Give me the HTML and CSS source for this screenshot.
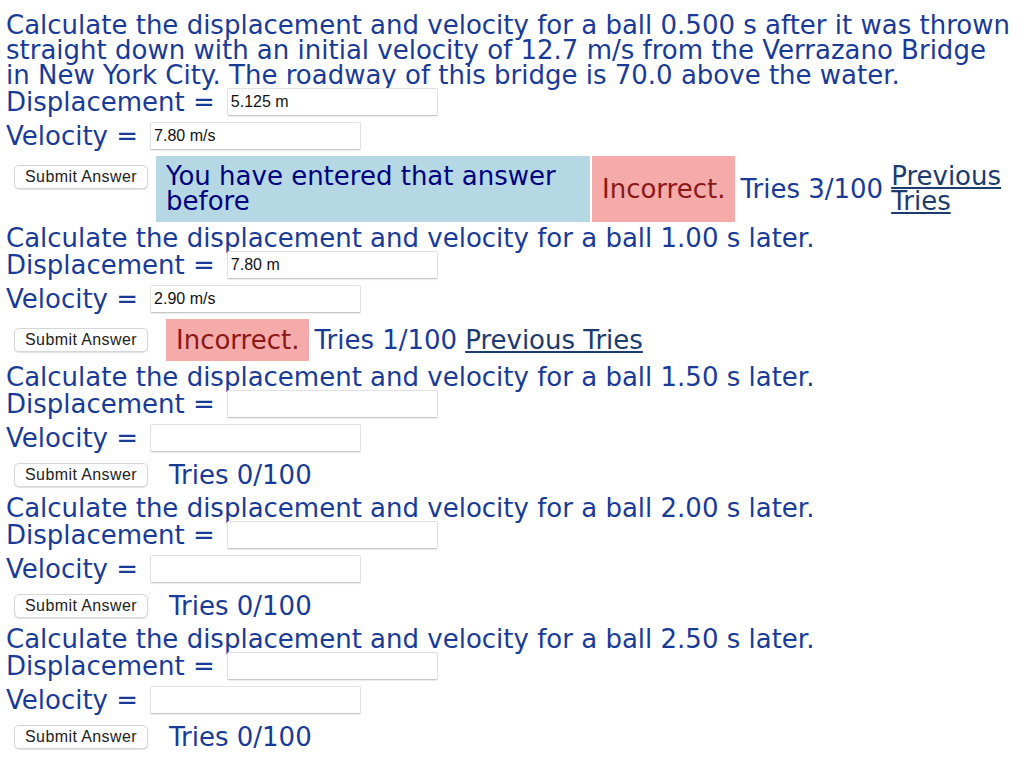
FILE: index.html
```html
<!DOCTYPE html>
<html lang="en">
<head>
    <meta charset="UTF-8">
    <title>Problem</title>
    <link rel="stylesheet" href="styles.css">
</head>
<body>
    <div class="part">
        <p class="question">Calculate the displacement and velocity for a ball 0.500 s after it was thrown straight down with an initial velocity of 12.7 m/s from the Verrazano Bridge in New York City. The roadway of this bridge is 70.0 above the water.</p>
        <div class="field"><span class="label">Displacement =</span><input class="entry" type="text" value="5.125 m"></div>
        <div class="field"><span class="label">Velocity =</span><input class="entry" type="text" value="7.80 m/s"></div>
        <table class="answer-row has-note">
            <tr>
                <td class="submit-cell"><button class="submit">Submit Answer</button></td>
                <td class="message note">You have entered that answer before</td>
                <td class="message incorrect">Incorrect.</td>
                <td class="tries">Tries 3/100</td>
                <td class="prev"><a href="#">Previous Tries</a></td>
            </tr>
        </table>
    </div>

    <div class="part">
        <p class="question">Calculate the displacement and velocity for a ball 1.00 s later.</p>
        <div class="field"><span class="label">Displacement =</span><input class="entry" type="text" value="7.80 m"></div>
        <div class="field"><span class="label">Velocity =</span><input class="entry" type="text" value="2.90 m/s"></div>
        <table class="answer-row">
            <tr>
                <td class="submit-cell"><button class="submit">Submit Answer</button></td>
                <td class="message empty"></td>
                <td class="message incorrect">Incorrect.</td>
                <td class="tries">Tries 1/100</td>
                <td class="prev"><a href="#">Previous Tries</a></td>
            </tr>
        </table>
    </div>

    <div class="part">
        <p class="question">Calculate the displacement and velocity for a ball 1.50 s later.</p>
        <div class="field"><span class="label">Displacement =</span><input class="entry" type="text"></div>
        <div class="field"><span class="label">Velocity =</span><input class="entry" type="text"></div>
        <table class="answer-row">
            <tr>
                <td class="submit-cell"><button class="submit">Submit Answer</button></td>
                <td class="message empty"></td>
                <td class="tries">Tries 0/100</td>
            </tr>
        </table>
    </div>

    <div class="part">
        <p class="question">Calculate the displacement and velocity for a ball 2.00 s later.</p>
        <div class="field"><span class="label">Displacement =</span><input class="entry" type="text"></div>
        <div class="field"><span class="label">Velocity =</span><input class="entry" type="text"></div>
        <table class="answer-row">
            <tr>
                <td class="submit-cell"><button class="submit">Submit Answer</button></td>
                <td class="message empty"></td>
                <td class="tries">Tries 0/100</td>
            </tr>
        </table>
    </div>

    <div class="part">
        <p class="question">Calculate the displacement and velocity for a ball 2.50 s later.</p>
        <div class="field"><span class="label">Displacement =</span><input class="entry" type="text"></div>
        <div class="field"><span class="label">Velocity =</span><input class="entry" type="text"></div>
        <table class="answer-row">
            <tr>
                <td class="submit-cell"><button class="submit">Submit Answer</button></td>
                <td class="message empty"></td>
                <td class="tries">Tries 0/100</td>
            </tr>
        </table>
    </div>
</body>
</html>
```

FILE: styles.css
```css
body {
    margin: 0;
    padding: 13px 8px 8px 6px;
    font-family: "DejaVu Sans", Verdana, sans-serif;
    font-size: 26px;
    line-height: 25px;
    color: #183b98;
    background: #fff;
}

.question {
    margin: 0;
}

.field {
    display: flex;
    align-items: center;
    gap: 12px;
    height: 28px;
}

.field + .field {
    margin-top: 6px;
}

.entry {
    box-sizing: border-box;
    width: 211px;
    height: 28px;
    padding: 0 3px;
    font-family: "Liberation Sans", Arial, sans-serif;
    font-size: 16px;
    color: #111;
    background: #fff;
    border: 1px solid #e2e2e2;
    border-bottom-color: #c8c8c8;
    border-radius: 2px;
    box-shadow: 0 1px 1px rgba(0, 0, 0, 0.08);
    outline: none;
}

.answer-row {
    border-spacing: 2px;
    border-collapse: separate;
    margin: 4px 0 2px;
}

.answer-row td {
    vertical-align: middle;
}

.submit-cell {
    padding: 5px 6px;
}

.has-note .submit-cell {
    vertical-align: top;
    padding-top: 9px;
}

.submit {
    display: block;
    box-sizing: border-box;
    width: 134px;
    height: 24px;
    padding: 0;
    font-family: "Liberation Sans", Arial, sans-serif;
    font-size: 16px;
    letter-spacing: 0.4px;
    color: #222;
    background: #fff;
    border: 1px solid #d6d6d6;
    border-radius: 5px;
    box-shadow: 0 1px 1px rgba(0, 0, 0, 0.12);
}

.message {
    padding: 8.5px 10px;
}

.message.empty {
    padding: 8px 4px;
}

.note {
    box-sizing: border-box;
    width: 434px;
    padding: 8px 10px;
    background: #b5d8e4;
    color: #000080;
}

.incorrect {
    background: #f4abaa;
    color: #8a1818;
    white-space: nowrap;
}

.tries {
    padding: 4px 3px;
    white-space: nowrap;
}

.prev {
    padding: 0 3px;
}

.prev a {
    color: #1c3b6e;
}
```
